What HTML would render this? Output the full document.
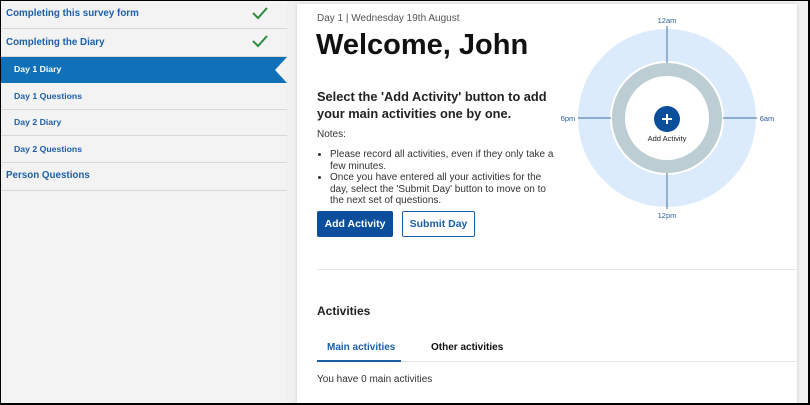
<!DOCTYPE html>
<html><head><style>
*{margin:0;padding:0;box-sizing:border-box}
body{width:810px;height:405px;overflow:hidden;font-family:"Liberation Sans",Arial,sans-serif;background:#000;position:relative}
.frame{position:absolute;left:1px;top:1px;width:807px;height:402px;background:#f0f0f0;overflow:hidden}
.side{position:absolute;left:0;top:0;width:286px;height:402px;background:#f3f3f3}
.row{position:absolute;left:0;width:286px;border-bottom:1px solid #d8d8d8;color:#1d5fa8;font-weight:bold}
.row.l1{font-size:9.8px;padding-left:5px}
.row.l2{font-size:8.7px;padding-left:13px}
.chk{position:absolute;right:18px;top:5px}
.active{background:#1070b8;color:#fff}
.main{position:absolute;left:296px;top:3px;width:500px;height:402px;background:#fff;box-shadow:0 0 4px rgba(0,0,0,.12)}
.t{position:absolute;color:#222}
.btn{position:absolute;height:26px;font-size:10.5px;font-weight:bold;border-radius:2px;text-align:center;line-height:24px}
</style></head><body><div class="frame">
<div class="side">
<div class="row l1" style="top:0;height:28px;line-height:25px">Completing this survey form<svg class="chk" width="18" height="14" viewBox="0 0 18 14"><path d="M2 7l5 5 9-10" stroke="#2e8b3e" stroke-width="2" fill="none"/></svg></div>
<div class="row l1" style="top:28px;height:28px;line-height:27px">Completing the Diary<svg class="chk" width="18" height="14" viewBox="0 0 18 14"><path d="M2 7l5 5 9-10" stroke="#2e8b3e" stroke-width="2" fill="none"/></svg></div>
<div class="row l2 active" style="top:56px;height:26px;line-height:24px;border:none">Day 1 Diary<svg style="position:absolute;right:0;top:0" width="12" height="26"><path d="M12 0L0 13 12 26z" fill="#f3f3f3"/></svg></div>
<div class="row l2" style="top:82px;height:27px;line-height:26px">Day 1 Questions</div>
<div class="row l2" style="top:109px;height:26px;line-height:25px">Day 2 Diary</div>
<div class="row l2" style="top:135px;height:27px;line-height:26px">Day 2 Questions</div>
<div class="row l1" style="top:162px;height:28px;line-height:25px">Person Questions</div>
</div>
<div class="main">
<div class="t" style="left:20px;top:9px;font-size:10px;color:#555">Day 1 | Wednesday 19th August</div>
<div class="t" style="left:19px;top:25px;font-size:29px;font-weight:bold;color:#111">Welcome, John</div>
<div class="t" style="left:20px;top:84px;font-size:12.8px;font-weight:bold;line-height:17px;width:260px">Select the 'Add Activity' button to add your main activities one by one.</div>
<div class="t" style="left:20px;top:125px;font-size:10px;color:#333">Notes:</div>
<ul class="t" style="left:20px;top:145px;font-size:10px;line-height:11.5px;width:240px;padding-left:13px;color:#333">
<li>Please record all activities, even if they only take a few minutes.</li>
<li>Once you have entered all your activities for the day, select the 'Submit Day' button to move on to the next set of questions.</li></ul>
<div class="btn" style="left:20px;top:207px;width:76px;background:#0b4f9c;color:#fff;border:1px solid #0b4f9c">Add Activity</div>
<div class="btn" style="left:105px;top:207px;width:73px;background:#fff;color:#1d5fa8;border:1px solid #1d5fa8">Submit Day</div>
<div style="position:absolute;left:20px;top:265px;width:480px;height:1px;background:#e6e6e6"></div>
<div class="t" style="left:20px;top:300px;font-size:12px;font-weight:bold">Activities</div>
<div class="t" style="left:30px;top:338px;font-size:10px;font-weight:bold;color:#1d5fa8">Main activities</div>
<div class="t" style="left:134px;top:338px;font-size:10px;font-weight:bold;color:#111">Other activities</div>
<div style="position:absolute;left:20px;top:357px;width:480px;height:1px;background:#e6e6e6"></div>
<div style="position:absolute;left:20px;top:356px;width:84px;height:2px;background:#1d5fa8"></div>
<div class="t" style="left:20px;top:370px;font-size:10px;color:#333">You have 0 main activities</div>
</div>
<svg style="position:absolute;left:0;top:0" width="810" height="405">
<circle cx="666" cy="117" r="89" fill="#dcebfb"/>
<circle cx="666" cy="117" r="57" fill="#fff"/>
<circle cx="666" cy="117" r="55" fill="#bccdd3"/>
<circle cx="666" cy="117" r="42" fill="#fff"/>
<g stroke="#5c87b8" stroke-width="1.2">
<line x1="666" y1="25" x2="666" y2="62"/><line x1="666" y1="172" x2="666" y2="208"/>
<line x1="577" y1="117" x2="610" y2="117"/><line x1="722" y1="117" x2="756" y2="117"/></g>
<circle cx="666" cy="118" r="13" fill="#0b4f9c"/>
<path d="M666 113v10M661 118h10" stroke="#fff" stroke-width="2"/>
<g font-family="Liberation Sans,Arial,sans-serif" font-size="7.5" fill="#2e5f9a" text-anchor="middle">
<text x="666" y="22">12am</text><text x="666" y="217">12pm</text><text x="567" y="120">6pm</text><text x="766" y="120">6am</text></g>
<text x="666" y="140" font-family="Liberation Sans,Arial,sans-serif" font-size="7.5" fill="#222" text-anchor="middle">Add Activity</text>
</svg>
</div></body></html>
